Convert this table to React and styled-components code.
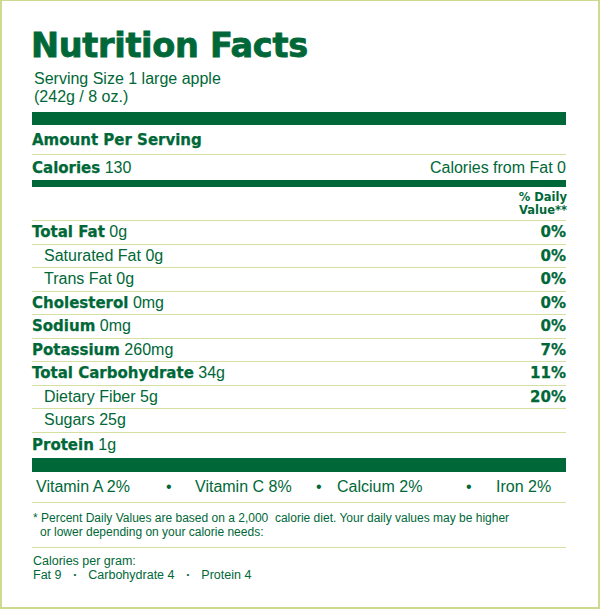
import React from 'react';
import styled, { createGlobalStyle } from 'styled-components';

const GREEN = '#006838';
const RULE = '#d5dfa0';

const GlobalStyle = createGlobalStyle`
  html, body {
    margin: 0;
    padding: 0;
    background: #fff;
  }
  body {
    font-family: "Liberation Sans", Arial, sans-serif;
    color: ${GREEN};
  }
`;

const Label = styled.div`
  box-sizing: border-box;
  width: 600px;
  height: 609px;
  border: solid #cfd98f;
  border-width: 1px 2px 2px 2px;
  padding: 26px 32px 0 30px;
  background: #fff;
`;

const Title = styled.h1`
  margin: 0 0 0 -1px;
  font-family: "DejaVu Sans", sans-serif;
  font-weight: bold;
  font-size: 33.5px;
  line-height: 38px;
  letter-spacing: -0.3px;
  -webkit-text-stroke: 0.8px ${GREEN};
`;

const Serving = styled.div`
  margin-top: 5px;
  padding-left: 2px;
  font-size: 16px;
  line-height: 18px;
`;

const Bar = styled.div`
  height: ${(p) => p.$h}px;
  margin-top: ${(p) => p.$top || 0}px;
  background: ${GREEN};
`;

const Row = styled.div`
  box-sizing: border-box;
  display: flex;
  justify-content: space-between;
  align-items: center;
  height: ${(p) => p.$h}px;
  padding-left: ${(p) => p.$indent || 0}px;
  border-top: ${(p) => (p.$line ? `1px solid ${RULE}` : 'none')};
  font-size: 16px;
`;

const Name = styled.span`
  font-family: "DejaVu Sans", sans-serif;
  font-weight: bold;
  font-size: 15px;
  -webkit-text-stroke: 0.25px ${GREEN};
`;

const Percent = styled(Name)``;

const DailyHead = styled.div`
  display: flex;
  flex-direction: column;
  justify-content: center;
  align-items: flex-end;
  height: 33px;
  margin-right: -1px;
  font-family: "DejaVu Sans", sans-serif;
  font-weight: bold;
  font-size: 11.5px;
  line-height: 13px;
  text-align: right;
`;

const Vitamins = styled.div`
  display: grid;
  grid-template-columns: 130px 29px 121px 21px 129px 30px auto;
  align-items: center;
  height: 30px;
  padding-left: 4px;
  font-size: 16px;
`;

const Dot = styled.span`
  font-size: 16px;
`;

const SmallDot = styled.span`
  display: inline-block;
  margin: 0 12px;
  font-size: 8px;
  vertical-align: 2px;
`;

const Footnote = styled.div`
  box-sizing: border-box;
  display: flex;
  flex-direction: column;
  justify-content: center;
  height: 45px;
  border-top: 1px solid ${RULE};
  padding-left: 1px;
  font-size: 12px;
  line-height: 14px;
  white-space: pre;
`;

const FootLine = styled.span`
  padding-left: ${(p) => p.$indent || 0}px;
`;

const PerGram = styled.div`
  border-top: 1px solid ${RULE};
  padding: 6px 0 0 1px;
  font-size: 12.5px;
  line-height: 14px;
`;

const nutrients = [
  { name: 'Total Fat', amount: '0g', pct: '0%' },
  { sub: 'Saturated Fat', amount: '0g', pct: '0%' },
  { sub: 'Trans Fat', amount: '0g', pct: '0%' },
  { name: 'Cholesterol', amount: '0mg', pct: '0%' },
  { name: 'Sodium', amount: '0mg', pct: '0%' },
  { name: 'Potassium', amount: '260mg', pct: '7%' },
  { name: 'Total Carbohydrate', amount: '34g', pct: '11%' },
  { sub: 'Dietary Fiber', amount: '5g', pct: '20%' },
  { sub: 'Sugars', amount: '25g' },
];

const vitamins = ['Vitamin A 2%', 'Vitamin C 8%', 'Calcium 2%', 'Iron 2%'];

export default function App() {
  return (
    <>
      <GlobalStyle />
      <Label>
        <Title>Nutrition Facts</Title>
        <Serving>
          Serving Size 1 large apple
          <br />
          (242g / 8 oz.)
        </Serving>
        <Bar $h={13} $top={6} />
        <Row $h={29}>
          <Name>Amount Per Serving</Name>
        </Row>
        <Row $h={26} $line>
          <span>
            <Name>Calories</Name> 130
          </span>
          <span>Calories from Fat 0</span>
        </Row>
        <Bar $h={7} />
        <DailyHead>
          <span>% Daily</span>
          <span>Value**</span>
        </DailyHead>
        {nutrients.map((n) => (
          <Row key={n.name || n.sub} $h={23.5} $line $indent={n.sub ? 12 : 0}>
            <span>
              {n.name ? <Name>{n.name}</Name> : n.sub} {n.amount}
            </span>
            {n.pct && <Percent>{n.pct}</Percent>}
          </Row>
        ))}
        <Row $h={26.5} $line>
          <span>
            <Name>Protein</Name> 1g
          </span>
        </Row>
        <Bar $h={14} />
        <Vitamins>
          {vitamins.map((v, i) => (
            <React.Fragment key={v}>
              {i > 0 && <Dot>•</Dot>}
              <span>{v}</span>
            </React.Fragment>
          ))}
        </Vitamins>
        <Footnote>
          <FootLine>* Percent Daily Values are based on a 2,000  calorie diet. Your daily values may be higher</FootLine>
          <FootLine $indent={7}>or lower depending on your calorie needs:</FootLine>
        </Footnote>
        <PerGram>
          Calories per gram:
          <br />
          Fat 9<SmallDot>•</SmallDot>Carbohydrate 4<SmallDot>•</SmallDot>Protein 4
        </PerGram>
      </Label>
    </>
  );
}
